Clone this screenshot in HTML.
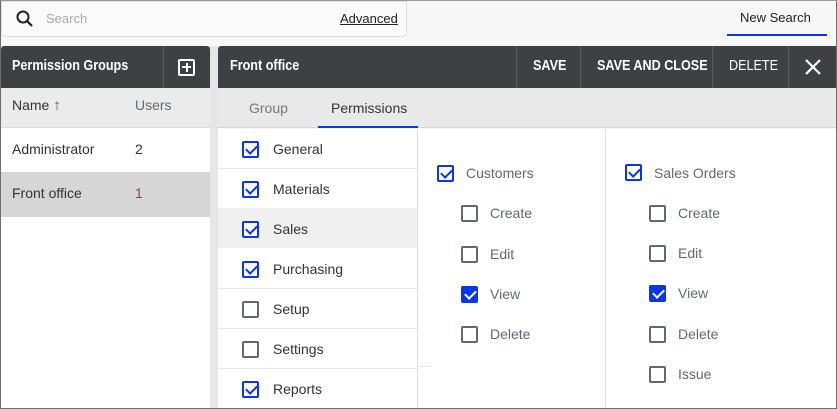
<!DOCTYPE html>
<html><head><meta charset="utf-8"><style>
*{box-sizing:border-box;margin:0;padding:0}
body{width:837px;height:409px;overflow:hidden;background:#f7f7f7;font-family:"Liberation Sans",sans-serif;position:relative}
.a{position:absolute}
.frame{position:absolute;left:0;top:0;width:837px;height:409px;border:1px solid #6e6e6e;border-top-color:#999;pointer-events:none;z-index:10}
.hdr{background:#3f4044;color:#fff}
.cond{display:inline-block;transform:scaleX(.84);transform-origin:left center;font-weight:bold;font-size:15px}
.t{font-size:14px;color:#333}
.g{color:#5f6b73;font-size:14px}
.cb{position:absolute;width:17px;height:17px;border:2px solid #5f6b73;border-radius:2px;background:#fff}
.cb.on{border-color:#0a35e8}
.cb.on::after,.cb.f::after{content:"";position:absolute;left:4px;top:0px;width:5px;height:9px;border:solid #0a35e8;border-width:0 2px 2px 0;transform:rotate(45deg)}
.cb.f{background:#0a35e8;border-color:#0a35e8}
.cb.f::after{border-color:#fff}
</style></head><body>
<div class="a" style="left:1px;top:1px;width:406px;height:36px;background:#fafafa;border:1px solid #ddd;border-radius:0 0 4px 4px"></div>
<svg class="a" style="left:15px;top:9px" width="20" height="20" viewBox="0 0 20 20"><circle cx="8" cy="8" r="5.5" fill="none" stroke="#222" stroke-width="2"/><path d="M12 12l5 5" stroke="#222" stroke-width="2.2"/></svg>
<div class="a" style="left:46px;top:11px;font-size:13px;color:#aaa">Search</div>
<div class="a" style="left:340px;top:11px;font-size:13px;color:#222;text-decoration:underline">Advanced</div>
<div class="a" style="left:740px;top:10px;font-size:13px;color:#222">New Search</div>
<div class="a" style="left:727px;top:34px;width:100px;height:2px;background:#0a35e8"></div>
<div class="a hdr" style="left:1px;top:46px;width:209px;height:42px;border-radius:3px 3px 0 0"></div>
<div class="a" style="left:12px;top:57px;color:#fff"><span class="cond">Permission Groups</span></div>
<div class="a" style="left:163px;top:46px;width:1px;height:42px;background:#5a5b5f"></div>
<div class="a" style="left:178px;top:59px;width:17px;height:17px;border:2px solid #fff;border-radius:2px"></div>
<div class="a" style="left:182px;top:66px;width:9px;height:2px;background:#fff"></div>
<div class="a" style="left:185.5px;top:63px;width:2px;height:9px;background:#fff"></div>
<div class="a" style="left:1px;top:88px;width:209px;height:40px;background:#ebebeb;border-bottom:1px solid #ddd"></div>
<div class="a g" style="left:12px;top:97px;color:#333">Name <span style="font-size:15px;color:#555">&#8593;</span></div>
<div class="a g" style="left:135px;top:97px">Users</div>
<div class="a" style="left:1px;top:128px;width:209px;height:281px;background:#fff"></div>
<div class="a t" style="left:12px;top:141px">Administrator</div>
<div class="a t" style="left:135px;top:141px">2</div>
<div class="a" style="left:1px;top:172px;width:209px;height:45px;background:#d6d6d6"></div>
<div class="a t" style="left:12px;top:185px">Front office</div>
<div class="a t" style="left:135px;top:185px;color:#8a4a20">1</div>
<div class="a" style="left:210px;top:46px;width:8px;height:363px;background:#e6e6e6"></div>
<div class="a hdr" style="left:218px;top:46px;width:619px;height:42px;border-radius:3px 0 0 0"></div>
<div class="a" style="left:230px;top:57px;color:#fff"><span class="cond">Front office</span></div>
<div class="a" style="left:516px;top:46px;width:1px;height:42px;background:#5a5b5f"></div>
<div class="a" style="left:580px;top:46px;width:1px;height:42px;background:#5a5b5f"></div>
<div class="a" style="left:712px;top:46px;width:1px;height:42px;background:#5a5b5f"></div>
<div class="a" style="left:788px;top:46px;width:1px;height:42px;background:#5a5b5f"></div>
<div class="a" style="left:533px;top:57px;color:#fff"><span class="cond">SAVE</span></div>
<div class="a" style="left:597px;top:57px;color:#fff"><span class="cond">SAVE AND CLOSE</span></div>
<div class="a" style="left:729px;top:57px;color:#fff"><span class="cond" style="font-weight:normal">DELETE</span></div>
<svg class="a" style="left:804px;top:58px" width="18" height="18" viewBox="0 0 18 18"><path d="M2 2L16 16M16 2L2 16" stroke="#fff" stroke-width="2.2"/></svg>
<div class="a" style="left:218px;top:88px;width:619px;height:40px;background:#e9e9e9;border-bottom:1px solid #d6d6d6"></div>
<div class="a g" style="left:249px;top:100px;color:#777">Group</div>
<div class="a t" style="left:331px;top:100px">Permissions</div>
<div class="a" style="left:318px;top:126px;width:100px;height:2px;background:#0a35e8"></div>
<div class="a" style="left:218px;top:129px;width:619px;height:280px;background:#fff"></div>
<div class="a" style="left:218px;top:208px;width:199px;height:40px;background:#f0f0f0"></div>
<div class="a" style="left:417px;top:129px;width:1px;height:280px;background:#e3e3e3"></div>
<div class="a" style="left:605px;top:129px;width:1px;height:280px;background:#e3e3e3"></div>
<div class="a" style="left:218px;top:168px;width:199px;height:1px;background:#e6e6e6"></div>
<div class="a" style="left:218px;top:288px;width:199px;height:1px;background:#e6e6e6"></div>
<div class="a" style="left:218px;top:328px;width:199px;height:1px;background:#e6e6e6"></div>
<div class="a" style="left:218px;top:368px;width:199px;height:1px;background:#e6e6e6"></div>
<div class="a" style="left:418px;top:366px;width:13px;height:1px;background:#e6e6e6"></div>
<div class="cb on" style="left:242px;top:141px"></div><div class="a t" style="left:273px;top:141px">General</div>
<div class="cb on" style="left:242px;top:181px"></div><div class="a t" style="left:273px;top:181px">Materials</div>
<div class="cb on" style="left:242px;top:221px"></div><div class="a t" style="left:273px;top:221px">Sales</div>
<div class="cb on" style="left:242px;top:261px"></div><div class="a t" style="left:273px;top:261px">Purchasing</div>
<div class="cb" style="left:242px;top:301px"></div><div class="a t" style="left:273px;top:301px">Setup</div>
<div class="cb" style="left:242px;top:341px"></div><div class="a t" style="left:273px;top:341px">Settings</div>
<div class="cb on" style="left:242px;top:381px"></div><div class="a t" style="left:273px;top:381px">Reports</div>
<div class="cb on" style="left:437px;top:165px"></div><div class="a g" style="left:466px;top:165px">Customers</div>
<div class="cb" style="left:461px;top:205px"></div><div class="a g" style="left:490px;top:205px">Create</div>
<div class="cb" style="left:461px;top:246px"></div><div class="a g" style="left:490px;top:246px">Edit</div>
<div class="cb f" style="left:461px;top:286px"></div><div class="a g" style="left:490px;top:286px">View</div>
<div class="cb" style="left:461px;top:326px"></div><div class="a g" style="left:490px;top:326px">Delete</div>
<div class="cb on" style="left:625px;top:164px"></div><div class="a g" style="left:654px;top:165px">Sales Orders</div>
<div class="cb" style="left:649px;top:205px"></div><div class="a g" style="left:678px;top:205px">Create</div>
<div class="cb" style="left:649px;top:245px"></div><div class="a g" style="left:678px;top:245px">Edit</div>
<div class="cb f" style="left:649px;top:285px"></div><div class="a g" style="left:678px;top:285px">View</div>
<div class="cb" style="left:649px;top:326px"></div><div class="a g" style="left:678px;top:326px">Delete</div>
<div class="cb" style="left:649px;top:366px"></div><div class="a g" style="left:678px;top:366px">Issue</div>
<div class="frame"></div>
</body></html>
